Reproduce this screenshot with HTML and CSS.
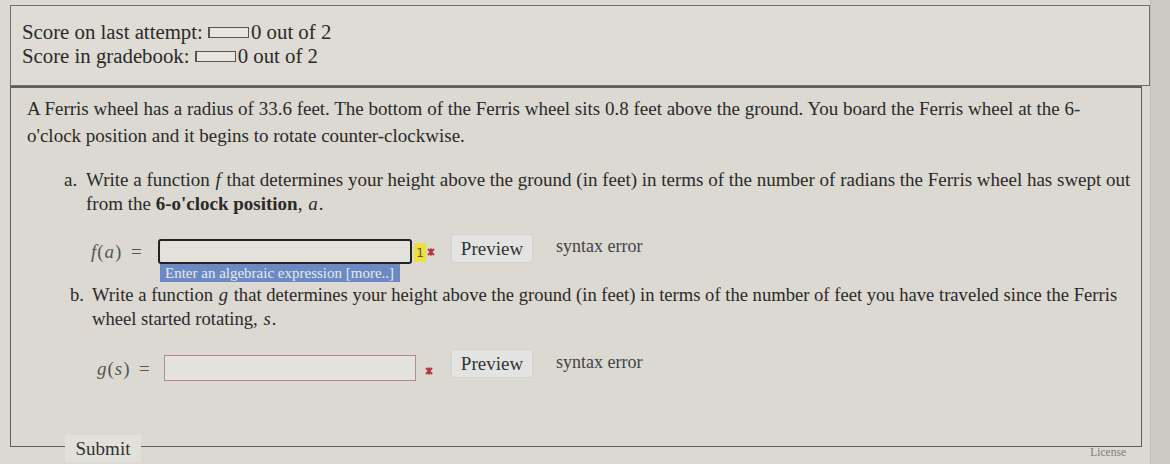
FILE: index.html
```html
<!DOCTYPE html>
<html>
<head>
<meta charset="utf-8">
<link rel="stylesheet" href="styles.css">
</head>
<body>
<div class="page">
  <div class="main">
    <div class="scorebox">
      <div class="scoreline">Score on last attempt: <span class="sbox"></span>0 out of 2</div>
      <div class="scoreline">Score in gradebook: <span class="sbox"></span>0 out of 2</div>
    </div>
    <div class="question">
      <p class="intro">A Ferris wheel has a radius of 33.6 feet. The bottom of the Ferris wheel sits 0.8 feet above the ground. You board the Ferris wheel at the 6-o'clock position and it begins to rotate counter-clockwise.</p>
      <div class="part part-a">
        <span class="plabel">a.</span>
        <div class="pbody">
          <p class="ptext">Write a function <i class="m">f</i> that determines your height above the ground (in feet) in terms of the number of radians the Ferris wheel has swept out from the <b>6-o'clock position</b>, <i class="m">a</i>.</p>
          <div class="answer">
            <span class="mlabel"><i class="mi">f</i>(<i class="mi">a</i>)&nbsp;&nbsp;=</span>
            <span class="inwrap">
              <span class="input input-dark"></span>
              <span class="tip">Enter an algebraic expression [more..]</span>
            </span>
            <span class="badge">1</span>
            <svg class="xmark" width="8" height="8" viewBox="0 0 8 8"><path d="M1 1L7 7M7 1L1 7M4 0.5V7.5" stroke="#b8363a" stroke-width="2"/></svg>
            <span class="preview">Preview</span>
            <span class="status">syntax error</span>
          </div>
        </div>
      </div>
      <div class="part part-b">
        <span class="plabel">b.</span>
        <div class="pbody">
          <p class="ptext">Write a function <i class="m">g</i> that determines your height above the ground (in feet) in terms of the number of feet you have traveled since the Ferris wheel started rotating, <i class="m">s</i>.</p>
          <div class="answer answer-b">
            <span class="mlabel"><i class="mi">g</i>(<i class="mi">s</i>)&nbsp;&nbsp;=</span>
            <span class="input input-red"></span>
            <svg class="xmark xmark-b" width="8" height="8" viewBox="0 0 8 8"><path d="M1 1L7 7M7 1L1 7M4 0.5V7.5" stroke="#b8363a" stroke-width="2"/></svg>
            <span class="preview">Preview</span>
            <span class="status">syntax error</span>
          </div>
        </div>
      </div>
    </div>
    <div class="footer">
      <span class="submit">Submit</span>
      <span class="license">License</span>
    </div>
  </div>
  <div class="strip"></div>
</div>
</body>
</html>
```
FILE: styles.css
```css
html, body {
  margin: 0;
  padding: 0;
}
body {
  background: #dbd9d1;
  font-family: "Liberation Serif", "Times New Roman", serif;
  color: #2a2a2a;
  width: 1170px;
  height: 464px;
  overflow: hidden;
}
.page {
  display: flex;
  height: 464px;
}
.main {
  width: 1140px;
  padding-left: 10px;
  padding-top: 5px;
}
.strip {
  flex: 1;
  background: #cbcac4;
  border-left: 1px solid #bdbcb6;
}
.scorebox {
  border: 1px solid #6f6f6a;
  padding: 14px 11px 17px;
  font-size: 20.8px;
  line-height: 24px;
  background: #dedcd5;
}
.sbox {
  display: inline-block;
  width: 38px;
  height: 9px;
  border: 1px solid #555;
  border-left-width: 2px;
  background: #e6e5df;
  vertical-align: 1px;
  margin-right: 2px;
}
.question {
  border: 1px solid #5e5e5a;
  border-top: 2px solid #5e5e5a;
  margin-right: 8px;
  height: 361px;
  box-sizing: border-box;
  padding: 7px 4px 0 16px;
  font-size: 19px;
}
.intro {
  margin: 0;
  line-height: 27px;
  width: 1100px;
}
.part {
  display: flex;
}
.part-a {
  margin-top: 19px;
  padding-left: 37px;
}
.part-b {
  margin-top: 20px;
  padding-left: 43px;
  font-size: 18.6px;
}
.plabel {
  width: 22px;
  line-height: 24px;
}
.pbody {
  flex: 1;
}
.ptext {
  margin: 0;
  line-height: 24px;
}
.m {
  font-family: "Liberation Serif", serif;
  font-style: italic;
  padding: 0 1px;
}
.mi {
  font-family: "Liberation Serif", serif;
  font-style: italic;
  padding: 0 1px;
}
.answer {
  display: flex;
  align-items: center;
  margin-top: 17px;
  height: 30px;
}
.answer-b {
  margin-top: 16px;
}
.mlabel {
  width: 72px;
  padding-left: 4px;
  font-size: 19px;
  color: #555;
  margin-top: 8px;
  box-sizing: border-box;
  white-space: nowrap;
}
.answer-b .mlabel {
  width: 72px;
  margin-top: 14px;
}
.inwrap {
  position: relative;
  display: inline-block;
  height: 25px;
  margin-top: 6px;
}
.input {
  display: block;
  width: 254px;
  height: 25px;
  box-sizing: border-box;
  background: #e2e1db;
}
.input-dark {
  border: 2px solid #222;
  border-radius: 3px;
}
.input-red {
  border: 1px solid #b98787;
  margin-top: 12px;
  height: 26px;
  width: 252px;
  background: #e3e2dc;
}
.tip {
  position: absolute;
  left: 2px;
  top: 25px;
  width: 240px;
  height: 18px;
  background: #6c89c3;
  color: #e4e9f3;
  font-size: 15px;
  line-height: 18px;
  padding-left: 5px;
  box-sizing: border-box;
  white-space: nowrap;
  overflow: hidden;
}
.badge {
  display: inline-block;
  width: 12px;
  height: 19px;
  background: #efdf3a;
  color: #555;
  font-size: 12px;
  line-height: 20px;
  text-align: center;
  margin-left: 2px;
  margin-top: 8px;
  font-family: "DejaVu Sans", sans-serif;
}
.xmark {
  margin-left: 1px;
  margin-top: 7px;
}
.xmark-b {
  margin-left: 9px;
  margin-top: 17px;
}
.preview {
  display: inline-block;
  margin-left: 16px;
  width: 82px;
  height: 29px;
  line-height: 28px;
  text-align: center;
  background: #e3e4e2;
  border: 1px solid #d2d3d0;
  border-radius: 2px;
  font-size: 19px;
  color: #333;
  box-sizing: border-box;
}
.answer-b .preview {
  margin-left: 18px;
  margin-top: 2px;
}
.status {
  margin-left: 23px;
  margin-top: -3px;
  font-size: 18px;
  color: #444;
}
.answer-b .status {
  margin-top: 0px;
}
.footer {
  display: flex;
  justify-content: space-between;
  align-items: center;
  margin-top: -12px;
  padding-left: 55px;
  padding-right: 24px;
}
.submit {
  display: inline-block;
  width: 76px;
  height: 27px;
  line-height: 27px;
  text-align: center;
  background: #e1e0da;
  font-size: 19px;
  color: #333;
}
.license {
  font-size: 11.5px;
  color: #7f7f7a;
  margin-top: 7px;
}
```
